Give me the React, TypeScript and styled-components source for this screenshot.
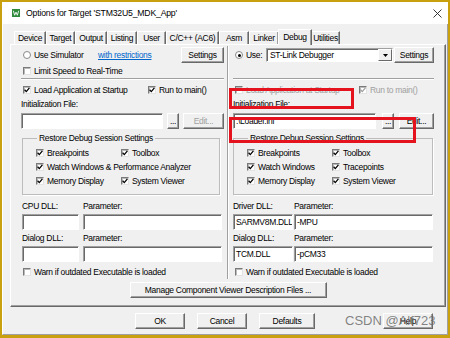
import React from "react";
import styled, { createGlobalStyle } from "styled-components";

const GlobalStyle = createGlobalStyle`
  html, body { margin: 0; padding: 0; background: #fff; }
  body {
    font-family: "Liberation Sans", Arial, sans-serif;
    font-size: 8.5px;
    letter-spacing: -0.3px;
    color: #000;
  }
  * { box-sizing: border-box; }
`;

const Window = styled.div`
  position: relative;
  width: 450px;
  height: 338px;
  border: 2px solid #c9a10e;
  border-bottom-width: 3px;
  display: flex;
  flex-direction: column;
  overflow: hidden;
  background: #f0f0f0;
`;

const TitleBar = styled.div`
  height: 22px;
  flex: none;
  background: #fff;
  display: flex;
  align-items: center;
  padding-left: 10px;
`;

const TitleText = styled.span`
  margin-left: 6px;
  font-size: 8.7px;
  letter-spacing: -0.2px;
`;

const CloseButton = styled.svg`
  margin-left: auto;
  margin-right: 6px;
`;

const Body = styled.div`
  flex: 1;
  padding: 5px 0 0 7px;
  border-right: 1px solid #a0a0a0;
  border-bottom: 1px solid #a0a0a0;
  border-left: 1px solid #fff;
`;

const TabStrip = styled.div`
  display: flex;
  align-items: flex-start;
  height: 16px;
  padding-left: 4px;
  margin-bottom: -1px;
  position: relative;
  z-index: 1;
`;

const Tab = styled.div<{ $w: number; $active?: boolean }>`
  width: ${(p) => p.$w}px;
  height: ${(p) => (p.$active ? 16 : 13)}px;
  margin-top: ${(p) => (p.$active ? 0 : 2)}px;
  margin-left: ${(p) => (p.$active ? -1 : 0)}px;
  margin-right: ${(p) => (p.$active ? -1 : 0)}px;
  background: #f0f0f0;
  border-top: 1px solid #fff;
  border-left: 1px solid #fff;
  border-right: 1px solid #696969;
  box-shadow: inset -1px 0 0 #a0a0a0;
  display: flex;
  justify-content: center;
  padding-top: ${(p) => (p.$active ? 2 : 1)}px;
  white-space: nowrap;
  position: relative;
  z-index: ${(p) => (p.$active ? 2 : 0)};
`;

const Panel = styled.div`
  width: 436px;
  height: 263px;
  border-top: 1px solid #fff;
  border-left: 1px solid #fff;
  border-right: 1px solid #696969;
  border-bottom: 1px solid #696969;
  box-shadow: inset -1px -1px 0 #a0a0a0;
  display: flex;
  flex-direction: column;
`;

const Columns = styled.div`
  display: flex;
  padding: 1px 10px 0 10px;
`;

const Column = styled.div<{ $w: number }>`
  width: ${(p) => p.$w}px;
  display: flex;
  flex-direction: column;
`;

const VDivider = styled.div`
  width: 2px;
  margin: 0 4px 0 3px;
  border-left: 1px solid #a0a0a0;
  border-right: 1px solid #fff;
`;

const Row = styled.div<{ $h?: number; $mt?: number }>`
  display: flex;
  align-items: center;
  height: ${(p) => p.$h ?? 14}px;
  margin-top: ${(p) => p.$mt ?? 0}px;
  white-space: nowrap;
`;

const Cell = styled.div<{ $w: number }>`
  width: ${(p) => p.$w}px;
  flex: none;
  display: flex;
  align-items: center;
`;

const CheckWrap = styled.div`
  display: flex;
  align-items: center;
`;

const WideCell = styled.div`
  grid-column: 1 / 3;
`;

const HSeparator = styled.div`
  height: 2px;
  border-top: 1px solid #a0a0a0;
  border-bottom: 1px solid #fff;
`;

const Label = styled.span<{ $disabled?: boolean }>`
  color: ${(p) => (p.$disabled ? "#a0a0a0" : "#000")};
  white-space: nowrap;
`;

const LinkText = styled.span`
  color: #0066cc;
  text-decoration: underline;
`;

const BoxMark = styled.span`
  width: 8px;
  height: 8px;
  flex: none;
  margin: 0 3px 0 2px;
  background: #fff;
  border: 1px solid;
  border-color: #7a7a7a #e3e3e3 #e3e3e3 #7a7a7a;
  box-shadow: inset 1px 1px 0 #b9b9b9;
  display: inline-flex;
  align-items: center;
  justify-content: center;
`;

const RadioMark = styled.span`
  width: 8px;
  height: 8px;
  flex: none;
  margin: 0 3px 0 2px;
  border-radius: 50%;
  background: #fff;
  border: 1px solid #8a8a8a;
  display: inline-flex;
  align-items: center;
  justify-content: center;
`;

const RadioDot = styled.span`
  width: 3px;
  height: 3px;
  border-radius: 50%;
  background: #000;
`;

const Button = styled.div<{ $w: number; $h?: number; $disabled?: boolean; $ml?: string }>`
  width: ${(p) => p.$w}px;
  height: ${(p) => p.$h ?? 16}px;
  flex: none;
  margin-left: ${(p) => p.$ml ?? "0"};
  background: #f0f0f0;
  border: 1px solid;
  border-color: #fff #696969 #696969 #fff;
  box-shadow: inset -1px -1px 0 #a0a0a0;
  display: flex;
  align-items: center;
  justify-content: center;
  color: ${(p) => (p.$disabled ? "#a0a0a0" : "#000")};
  white-space: nowrap;
`;

const Input = styled.div<{ $w: number }>`
  width: ${(p) => p.$w}px;
  height: 16px;
  flex: none;
  background: #fff;
  border: 1px solid;
  border-color: #a0a0a0 #fff #fff #a0a0a0;
  box-shadow: inset 1px 1px 0 #696969;
  display: flex;
  align-items: center;
  padding-left: 2px;
  white-space: nowrap;
  overflow: hidden;
`;

const Select = styled.div`
  width: 127px;
  height: 14px;
  flex: none;
  background: #fff;
  border: 1px solid;
  border-color: #a0a0a0 #fff #fff #a0a0a0;
  box-shadow: inset 1px 1px 0 #696969;
  display: flex;
  align-items: center;
  padding-left: 3px;
`;

const SelectArrow = styled.div`
  margin-left: auto;
  width: 14px;
  height: 12px;
  background: #f0f0f0;
  border: 1px solid;
  border-color: #fff #696969 #696969 #fff;
  display: flex;
  align-items: center;
  justify-content: center;
`;

const Group = styled.fieldset<{ $w: number; $ml: number }>`
  width: ${(p) => p.$w}px;
  margin: 3px 0 0 ${(p) => p.$ml}px;
  padding: 2px 0 6px 11px;
  border: 1px solid #bcbcbc;
  box-shadow: 1px 1px 0 #fff;
  min-width: 0;
`;

const Legend = styled.legend`
  padding: 0 2px;
  margin-left: 3px;
  line-height: 12px;
  white-space: nowrap;
`;

const CheckGrid = styled.div`
  display: grid;
  grid-template-columns: 85px auto;
  grid-auto-rows: 14px;
  align-items: center;
`;

const DllGrid = styled.div<{ $first: number; $gap: number; $ml: number }>`
  display: grid;
  grid-template-columns: ${(p) => p.$first}px 139px;
  column-gap: ${(p) => p.$gap}px;
  margin-left: ${(p) => p.$ml}px;
`;

const GridLabel = styled.div<{ $mt: number }>`
  height: 14px;
  margin-top: ${(p) => p.$mt}px;
  display: flex;
  align-items: center;
  white-space: nowrap;
`;

const GridInput = styled(Input)`
  margin-top: 1px;
`;

const ManageRow = styled.div`
  display: flex;
  justify-content: center;
  margin-top: 3px;
`;

const DialogButtons = styled.div`
  display: flex;
  margin: 6px 0 0 125px;
  gap: 12px;
`;

const RedFrame = styled.div<{ $x: number; $y: number; $w: number; $h: number }>`
  position: absolute;
  left: ${(p) => p.$x}px;
  top: ${(p) => p.$y}px;
  width: ${(p) => p.$w}px;
  height: ${(p) => p.$h}px;
  border: 3px solid #e5131d;
  pointer-events: none;
`;

const Watermark = styled.div`
  position: absolute;
  left: 343px;
  top: 311px;
  font-size: 13px;
  letter-spacing: 0;
  color: rgba(110, 110, 110, 0.85);
  white-space: nowrap;
`;

function Tick({ disabled }: { disabled?: boolean }) {
  return (
    <svg width="6" height="6" viewBox="0 0 6 6">
      <path
        d="M0.6 2.8 L2.3 4.6 L5.4 0.8"
        fill="none"
        stroke={disabled ? "#a0a0a0" : "#000"}
        strokeWidth="1.3"
      />
    </svg>
  );
}

function Check({
  label,
  checked,
  disabled,
}: {
  label: string;
  checked?: boolean;
  disabled?: boolean;
}) {
  return (
    <CheckWrap>
      <BoxMark>{checked && <Tick disabled={disabled} />}</BoxMark>
      <Label $disabled={disabled}>{label}</Label>
    </CheckWrap>
  );
}

function Radio({ label, checked }: { label: string; checked?: boolean }) {
  return (
    <>
      <RadioMark>{checked && <RadioDot />}</RadioMark>
      <Label>{label}</Label>
    </>
  );
}

function Half({ right }: { right?: boolean }) {
  return (
    <Column $w={right ? 201 : 203}>
      <Row $h={18}>
        {right ? (
          <>
            <Cell $w={33}>
              <Radio label="Use:" checked />
            </Cell>
            <Select>
              ST-Link Debugger
              <SelectArrow>
                <svg width="5" height="3" viewBox="0 0 5 3">
                  <path d="M0 0 H5 L2.5 3 Z" fill="#000" />
                </svg>
              </SelectArrow>
            </Select>
            <Button $w={40} $ml="auto">
              Settings
            </Button>
          </>
        ) : (
          <>
            <Cell $w={77}>
              <Radio label="Use Simulator" />
            </Cell>
            <LinkText>with restrictions</LinkText>
            <Button $w={43} $ml="auto">
              Settings
            </Button>
          </>
        )}
      </Row>
      <Row>{!right && <Check label="Limit Speed to Real-Time" />}</Row>
      <HSeparator />
      <Row $mt={3}>
        <Cell $w={right ? 124 : 125}>
          <Check label="Load Application at Startup" checked={!right} disabled={right} />
        </Cell>
        <Check label="Run to main()" checked disabled={right} />
      </Row>
      <Row>
        <Label>Initialization File:</Label>
      </Row>
      <Row $h={16} $mt={2}>
        <Input $w={right ? 143 : 142}>{right ? ".\\Loader.ini" : ""}</Input>
        <Button $w={12} $ml={right ? "6px" : "4px"}>
          ...
        </Button>
        <Button $w={right ? 35 : 41} $disabled={!right} $ml="auto">
          Edit...
        </Button>
      </Row>
      <Group $w={right ? 200 : 198} $ml={right ? 0 : 1}>
        <Legend>Restore Debug Session Settings</Legend>
        <CheckGrid>
          <Check label="Breakpoints" checked />
          <Check label="Toolbox" checked />
          {right ? (
            <>
              <Check label="Watch Windows" checked />
              <Check label="Tracepoints" checked />
            </>
          ) : (
            <WideCell>
              <Check label="Watch Windows & Performance Analyzer" checked />
            </WideCell>
          )}
          <Check label="Memory Display" checked />
          <Check label="System Viewer" checked />
        </CheckGrid>
      </Group>
      <DllGrid $first={right ? 60 : 57} $gap={right ? 1 : 4} $ml={right ? 0 : 1}>
        <GridLabel $mt={4}>{right ? "Driver DLL:" : "CPU DLL:"}</GridLabel>
        <GridLabel $mt={4}>Parameter:</GridLabel>
        <GridInput $w={right ? 60 : 57}>{right ? "SARMV8M.DLL" : ""}</GridInput>
        <GridInput $w={139}>{right ? "-MPU" : ""}</GridInput>
        <GridLabel $mt={1}>Dialog DLL:</GridLabel>
        <GridLabel $mt={1}>Parameter:</GridLabel>
        <GridInput $w={right ? 60 : 57}>{right ? "TCM.DLL" : ""}</GridInput>
        <GridInput $w={139}>{right ? "-pCM33" : ""}</GridInput>
      </DllGrid>
      <Row $mt={3}>
        <Check label="Warn if outdated Executable is loaded" />
      </Row>
    </Column>
  );
}

const tabs: [string, number][] = [
  ["Device", 32],
  ["Target", 29],
  ["Output", 32],
  ["Listing", 30],
  ["User", 29],
  ["C/C++ (AC6)", 53],
  ["Asm", 30],
  ["Linker", 30],
  ["Debug", 34],
  ["Utilities", 29],
];

export default function App() {
  return (
    <>
      <GlobalStyle />
      <Window>
        <TitleBar>
          <svg width="8" height="8" viewBox="0 0 9 9">
            <rect width="9" height="9" fill="#2f8a3c" />
            <path d="M1.5 2 L3 7 L4.5 3.5 L6 7 L7.5 2" fill="none" stroke="#fff" strokeWidth="1" />
          </svg>
          <TitleText>Options for Target 'STM32U5_MDK_App'</TitleText>
          <CloseButton width="9" height="9" viewBox="0 0 9 9">
            <path d="M0.5 0.5 L8.5 8.5 M8.5 0.5 L0.5 8.5" stroke="#222" strokeWidth="0.9" />
          </CloseButton>
        </TitleBar>
        <Body>
          <TabStrip>
            {tabs.map(([name, w]) => (
              <Tab key={name} $w={w} $active={name === "Debug"}>
                {name}
              </Tab>
            ))}
          </TabStrip>
          <Panel>
            <Columns>
              <Half />
              <VDivider />
              <Half right />
            </Columns>
            <ManageRow>
              <Button $w={197}>Manage Component Viewer Description Files ...</Button>
            </ManageRow>
          </Panel>
          <DialogButtons>
            <Button $w={50}>OK</Button>
            <Button $w={50}>Cancel</Button>
            <Button $w={56}>Defaults</Button>
            <Button $w={50} $ml="56px">
              Help
            </Button>
          </DialogButtons>
        </Body>
        <RedFrame $x={227} $y={86} $w={125} $h={21} />
        <RedFrame $x={227} $y={115} $w={187} $h={26} />
        <Watermark>CSDN @Alf723</Watermark>
      </Window>
    </>
  );
}
